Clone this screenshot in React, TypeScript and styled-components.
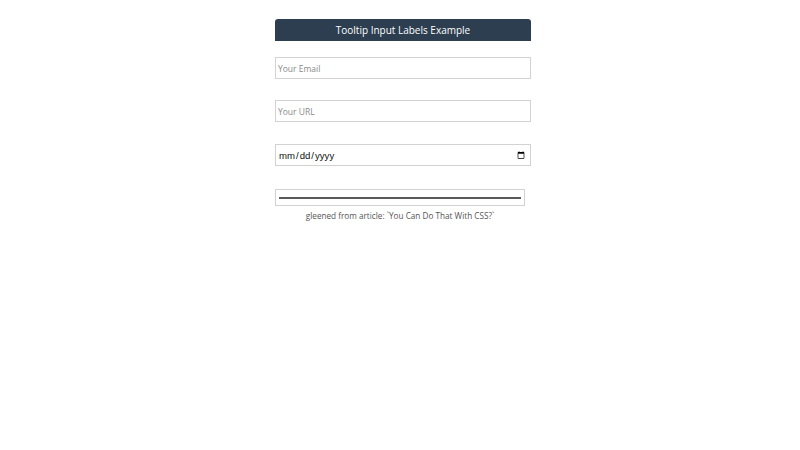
import React from "react";
import styled, { createGlobalStyle } from "styled-components";

const GlobalStyle = createGlobalStyle`
  html, body {
    margin: 0;
    padding: 0;
    background: #fff;
    font-family: "Open Sans", "Liberation Sans", sans-serif;
  }
`;

const Page = styled.div`
  display: flex;
  flex-direction: column;
  align-items: center;
  padding-top: 19px;
`;

// inputs are width:100% content-box, so they run 6px past the 250px form
const Form = styled.form`
  width: 250px;
  display: flex;
  flex-direction: column;
  align-items: flex-start;
`;

const Title = styled.h1`
  width: 100%;
  margin: 0 0 16px;
  padding: 0 3px;
  height: 22px;
  line-height: 22px;
  background: #2c3e50;
  color: #fff;
  font-size: 10px;
  font-weight: 400;
  text-align: center;
  border-radius: 3px 3px 0 0;
`;

const Field = styled.input<{ $gap: number }>`
  box-sizing: content-box;
  width: 100%;
  height: 20px;
  margin: 0 0 ${({ $gap }) => $gap}px;
  padding: 0 2px;
  border: 1px solid #d2d2d2;
  border-radius: 0;
  font-family: "Open Sans", "Liberation Sans", sans-serif;
  font-size: 8.5px;
  color: #222;
  outline: none;

  &::placeholder {
    color: #8a8a8a;
  }
`;

const DateField = styled(Field)`
  font-family: "Liberation Sans", Arial, sans-serif;
  font-size: 9.6px;
  color: #111;

  &::-webkit-calendar-picker-indicator {
    width: 8px;
    height: 8px;
    margin-right: 1px;
  }
`;

const Range = styled.input`
  -webkit-appearance: none;
  appearance: none;
  box-sizing: border-box;
  width: 250px;
  height: 17px;
  margin: 0;
  padding: 0 3px;
  border: 1px solid #d2d2d2;
  background: #fff;

  &::-webkit-slider-runnable-track {
    height: 2px;
    background: #5a5a5a;
  }

  &::-webkit-slider-thumb {
    -webkit-appearance: none;
    width: 0;
    height: 0;
  }
`;

const Note = styled.p`
  margin: 4px 0 0;
  text-align: center;
  font-size: 8.2px;
  color: #555;
`;

export default function App() {
  return (
    <>
      <GlobalStyle />
      <Page>
        <Form onSubmit={(e) => e.preventDefault()}>
          <Title>Tooltip Input Labels Example</Title>
          <Field $gap={21} type="email" placeholder="Your Email" />
          <Field $gap={22} type="url" placeholder="Your URL" />
          <DateField $gap={23} type="date" />
          <Range type="range" />
        </Form>
        <Note>gleened from article: `You Can Do That With CSS?`</Note>
      </Page>
    </>
  );
}
